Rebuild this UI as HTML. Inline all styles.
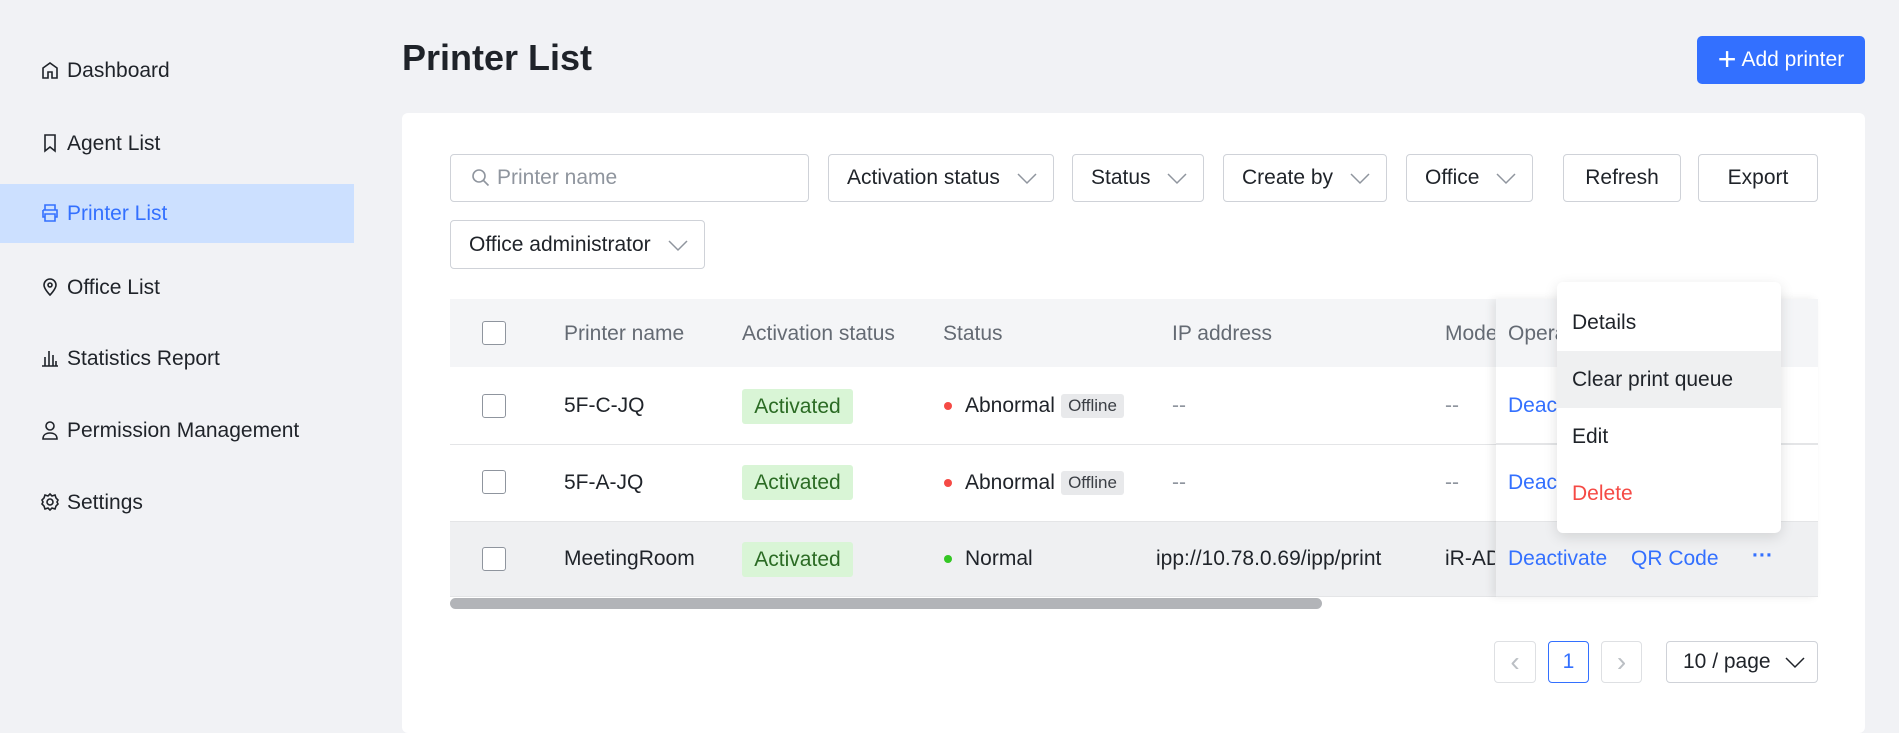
<!DOCTYPE html>
<html><head><meta charset="utf-8"><style>
*{box-sizing:border-box;margin:0;padding:0}
body{width:1899px;height:707px;background:#f1f2f5;font-family:"Liberation Sans",sans-serif;color:#1f2329;position:relative;overflow:hidden;font-size:21px}
.a{position:absolute}
.nav{position:absolute;left:0;width:354px;height:60px;display:flex;align-items:center;padding-left:40px;font-size:21px;color:#1f2329}
.nav svg{width:20px;height:20px;margin-right:7px;fill:none;stroke:currentColor;stroke-width:1.6;margin-top:-2px}
.nav.on{background:#cce0ff;color:#3370ff}
.box{position:absolute;border:1px solid #cfd2d8;border-radius:4px;background:#fff;display:flex;align-items:center;padding-left:18px;font-size:21px}
.box .ch{position:absolute;right:16px;top:50%;width:20px;height:12px;margin-top:-5px}
.btn{justify-content:center;padding:0}
.cb{position:absolute;width:24px;height:24px;border:1.5px solid #8f959e;border-radius:3px;background:#fff}
.t{position:absolute;font-size:21px;transform:translateY(-50%);white-space:nowrap}
.tag{position:absolute;background:#d9f5d6;color:#2b6b24;font-size:21px;display:flex;align-items:center;justify-content:center;border-radius:3px}
.off{position:absolute;background:#e8e9eb;color:#3b3f45;font-size:17px;display:flex;align-items:center;justify-content:center;border-radius:3px}
.dot{position:absolute;width:8px;height:8px;border-radius:50%}
.blue{color:#3370ff}
.mi{position:absolute;left:1557px;width:224px;height:57px;display:flex;align-items:center;padding-left:15px;font-size:21px}
</style></head><body>
<svg width="0" height="0" style="position:absolute"><defs><symbol id="chv" viewBox="0 0 20 12"><path d="M1 1l9 9 9-9" fill="none" stroke="#8f959e" stroke-width="1.5"/></symbol></defs></svg>
<!-- sidebar -->
<div class="nav" style="top:41px"><svg viewBox="0 0 20 20"><path d="M3 18V8l7-5 7 5v10h-5v-6H8v6z"/></svg>Dashboard</div>
<div class="nav" style="top:114px"><svg viewBox="0 0 20 20"><path d="M5 2h10v16l-5-4-5 4z"/></svg>Agent List</div>
<div class="nav on" style="top:184px;height:59px"><svg viewBox="0 0 20 20"><path d="M5 7V2h10v5M3 7h14v7h-2M5 14H3V7M5 11h10v7H5z"/></svg>Printer List</div>
<div class="nav" style="top:258px"><svg viewBox="0 0 20 20"><path d="M10 18s-6-6-6-10a6 6 0 0112 0c0 4-6 10-6 10z"/><circle cx="10" cy="8" r="2"/></svg>Office List</div>
<div class="nav" style="top:329px"><svg viewBox="0 0 20 20"><path d="M2 18h16M5 18V9M9 18V3M13 18V7M16 18v-5"/></svg>Statistics Report</div>
<div class="nav" style="top:401px"><svg viewBox="0 0 20 20"><circle cx="10" cy="6" r="4"/><path d="M3 19c0-4 3-6 7-6s7 2 7 6z"/></svg>Permission Management</div>
<div class="nav" style="top:473px"><svg viewBox="0 0 20 20"><circle cx="10" cy="10" r="3"/><path d="M10 2l2 2 3-1 1 3 2 2-1 2 1 2-2 2-1 3-3-1-2 2-2-2-3 1-1-3-2-2 1-2-1-2 2-2 1-3 3 1z"/></svg>Settings</div>
<!-- header -->
<div class="a" style="left:402px;top:37px;font-size:36px;font-weight:bold">Printer List</div>
<div class="a" style="left:1697px;top:36px;width:168px;height:48px;background:#3370ff;border-radius:5px;color:#fff;display:flex;align-items:center;justify-content:center;font-size:21px"><span style="font-size:32px;font-weight:300;margin-right:5px;line-height:1;margin-top:-3px">+</span>Add printer</div>
<!-- card -->
<div class="a" style="left:402px;top:113px;width:1463px;height:620px;background:#fff;border-radius:6px"></div>
<div class="box" style="left:450px;top:154px;width:359px;height:48px;color:#8f959e;padding-left:20px"><svg width="20" height="20" viewBox="0 0 20 20" style="margin-right:6px" fill="none" stroke="#8f959e" stroke-width="1.6"><circle cx="8" cy="8" r="6"/><path d="M12.5 12.5l5 5"/></svg>Printer name</div>
<div class="box" style="left:828px;top:154px;width:226px;height:48px">Activation status<svg class="ch"><use href="#chv"/></svg></div>
<div class="box" style="left:1072px;top:154px;width:132px;height:48px">Status<svg class="ch"><use href="#chv"/></svg></div>
<div class="box" style="left:1223px;top:154px;width:164px;height:48px">Create by<svg class="ch"><use href="#chv"/></svg></div>
<div class="box" style="left:1406px;top:154px;width:127px;height:48px">Office<svg class="ch"><use href="#chv"/></svg></div>
<div class="box btn" style="left:1563px;top:154px;width:118px;height:48px">Refresh</div>
<div class="box btn" style="left:1698px;top:154px;width:120px;height:48px">Export</div>
<div class="box" style="left:450px;top:220px;width:255px;height:49px">Office administrator<svg class="ch"><use href="#chv"/></svg></div>
<!-- table -->
<div class="a" style="left:450px;top:299px;width:1368px;height:68px;background:#f4f5f7"></div>
<div class="a" style="left:450px;top:444px;width:1368px;height:1px;background:#e4e5e7"></div>
<div class="a" style="left:450px;top:521px;width:1368px;height:76px;background:#eff0f2;border-top:1px solid #e4e5e7;border-bottom:1px solid #e4e5e7"></div>
<div class="a" style="left:450px;top:598px;width:872px;height:11px;background:#b2b4b8;border-radius:6px"></div>
<div class="a" style="left:1496px;top:299px;width:322px;height:298px;box-shadow:-4px 0 8px rgba(0,0,0,0.08)"></div>
<div class="a" style="left:1496px;top:299px;width:322px;height:68px;background:#f4f5f7"></div>
<div class="a" style="left:1496px;top:367px;width:322px;height:77px;background:#fff;border-bottom:1px solid #e4e5e7"></div>
<div class="a" style="left:1496px;top:445px;width:322px;height:76px;background:#fff"></div>
<div class="a" style="left:1496px;top:521px;width:322px;height:76px;background:#eff0f2;border-top:1px solid #e4e5e7;border-bottom:1px solid #e4e5e7"></div>
<div class="cb" style="left:482px;top:321px"></div>
<div class="cb" style="left:482px;top:394px"></div>
<div class="cb" style="left:482px;top:470px"></div>
<div class="cb" style="left:482px;top:547px"></div>
<div class="t" style="left:564px;top:334px;color:#646a73">Printer name</div>
<div class="t" style="left:742px;top:334px;color:#646a73">Activation status</div>
<div class="t" style="left:943px;top:334px;color:#646a73">Status</div>
<div class="t" style="left:1172px;top:334px;color:#646a73">IP address</div>
<div class="t" style="left:1445px;top:334px;color:#646a73;width:50px;overflow:hidden">Model</div>
<div class="t" style="left:1508px;top:334px;color:#646a73">Opera</div>

<div class="t" style="left:564px;top:406px">5F-C-JQ</div>
<div class="tag" style="left:742px;top:389px;width:111px;height:35px">Activated</div>
<div class="dot" style="left:944px;top:402px;background:#f54a45"></div>
<div class="t" style="left:965px;top:406px">Abnormal</div>
<div class="off" style="left:1061px;top:394px;width:63px;height:24px">Offline</div>
<div class="t" style="left:1172px;top:406px;color:#8f959e">--</div>
<div class="t" style="left:1445px;top:406px;color:#8f959e">--</div>
<div class="t blue" style="left:1508px;top:406px">Deac</div>

<div class="t" style="left:564px;top:483px">5F-A-JQ</div>
<div class="tag" style="left:742px;top:465px;width:111px;height:35px">Activated</div>
<div class="dot" style="left:944px;top:479px;background:#f54a45"></div>
<div class="t" style="left:965px;top:483px">Abnormal</div>
<div class="off" style="left:1061px;top:471px;width:63px;height:24px">Offline</div>
<div class="t" style="left:1172px;top:483px;color:#8f959e">--</div>
<div class="t" style="left:1445px;top:483px;color:#8f959e">--</div>
<div class="t blue" style="left:1508px;top:483px">Deac</div>

<div class="t" style="left:564px;top:559px">MeetingRoom</div>
<div class="tag" style="left:742px;top:542px;width:111px;height:35px">Activated</div>
<div class="dot" style="left:944px;top:555px;background:#34c724"></div>
<div class="t" style="left:965px;top:559px">Normal</div>
<div class="t" style="left:1156px;top:559px">ipp://10.78.0.69/ipp/print</div>
<div class="t" style="left:1445px;top:559px;width:50px;overflow:hidden">iR-ADV</div>
<div class="t blue" style="left:1508px;top:559px">Deactivate</div>
<div class="t blue" style="left:1631px;top:559px">QR Code</div>
<div class="t blue" style="left:1752px;top:556px;font-weight:bold">···</div>
<!-- dropdown -->
<div class="a" style="left:1557px;top:282px;width:224px;height:251px;background:#fff;border-radius:6px;box-shadow:0 4px 14px rgba(0,0,0,0.12)"></div>
<div class="mi" style="top:294px">Details</div>
<div class="mi" style="top:351px;background:#eff0f1">Clear print queue</div>
<div class="mi" style="top:408px">Edit</div>
<div class="mi" style="top:465px;color:#f54a45">Delete</div>
<!-- pagination -->
<div class="box btn" style="left:1494px;top:641px;width:42px;height:42px;border-color:#dee0e3;color:#bbbfc4;font-size:28px">&#x2039;</div>
<div class="box btn" style="left:1548px;top:641px;width:41px;height:42px;border-color:#3370ff;color:#3370ff">1</div>
<div class="box btn" style="left:1601px;top:641px;width:41px;height:42px;border-color:#dee0e3;color:#bbbfc4;font-size:28px">&#x203A;</div>
<div class="box" style="left:1666px;top:641px;width:152px;height:42px;padding-left:16px">10 / page<svg class="ch" style="right:12px"><path d="M1 1l9 9 9-9" fill="none" stroke="#1f2329" stroke-width="1.5"/></svg></div>
</body></html>
